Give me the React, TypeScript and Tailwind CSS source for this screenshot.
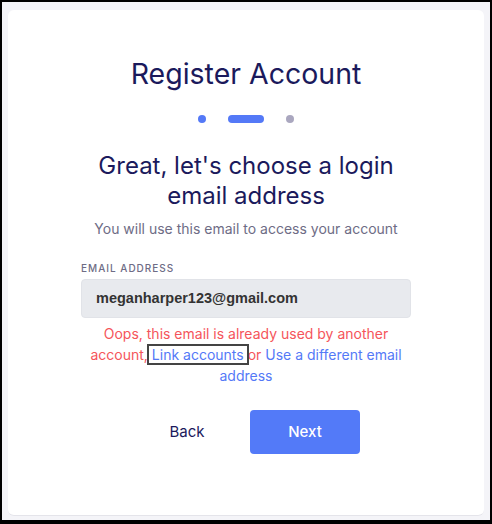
export default function App() {
  return (
    <div className="w-[492px] h-[524px] border-x-2 border-t-2 border-b-4 border-black bg-[#f4f4f8] px-[6px] pt-2 font-['Inter',sans-serif]">
      <div className="h-[506px] rounded-md bg-white border-b border-[#e4e4ea] flex flex-col items-center pt-[47px]">
        {/* Title */}
        <h1 className="text-[28.5px] leading-[34px] text-[#1b1a5c]">Register Account</h1>

        {/* Step indicator */}
        <div className="mt-6 flex items-center gap-[22px]">
          <span className="h-2 w-2 rounded-full bg-[#5479f7]" />
          <span className="h-2 w-9 rounded-full bg-[#5479f7]" />
          <span className="h-2 w-2 rounded-full bg-[#aaa7bf]" />
        </div>

        {/* Heading */}
        <h2 className="mt-[28px] w-[330px] text-center text-[24px] leading-[30px] text-[#1b1a5c]">
          Great, let's choose a login email address
        </h2>
        <p className="mt-2 text-sm leading-5 text-[#6e6c85]">
          You will use this email to access your account
        </p>

        {/* Email field */}
        <div className="mt-[22px] w-[330px] flex flex-col">
          <label className="text-[10px] leading-[14px] tracking-[0.1em] font-medium text-[#6e6c85]">
            EMAIL ADDRESS
          </label>
          <div className="mt-1 h-[39px] rounded bg-[#e8eaee] border border-[#e1e3e8] flex items-center px-[14px]">
            <span className="font-['Liberation_Sans',Arial,sans-serif] font-bold text-[14.5px] text-[#333333]">
              meganharper123@gmail.com
            </span>
          </div>
          <p className="mt-[5px] px-2 text-center text-sm leading-[21px] text-[#f5555b]">
            Oops, this email is already used by another account,
            <a className="text-[#5479f7] outline-2 outline-[#444] px-[3px] mx-[1px]">Link accounts</a>
            or <a className="text-[#5479f7]">Use a different email address</a>
          </p>
        </div>

        {/* Actions */}
        <div className="mt-6 flex gap-2">
          <button className="h-11 w-[110px] rounded text-[15px] text-[#1b1a5c]">Back</button>
          <button className="h-11 w-[110px] rounded bg-[#537af8] text-[15px] font-medium text-white">Next</button>
        </div>
      </div>
    </div>
  );
}
